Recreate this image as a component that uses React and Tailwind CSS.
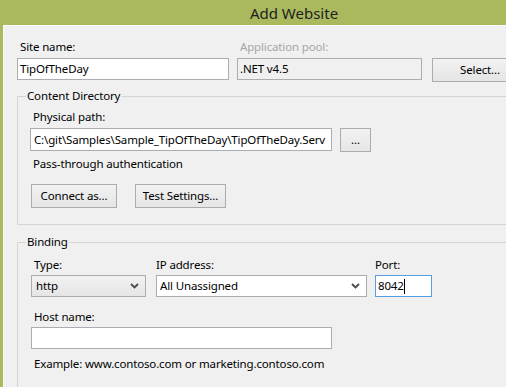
import React from "react";

const Chevron = () => (
  <svg width="9" height="6" viewBox="0 0 9 6" className="shrink-0">
    <polyline points="1,1 4.5,4.5 8,1" fill="none" stroke="#4a4a4a" strokeWidth="1.8" />
  </svg>
);

const Btn = ({ children, className = "" }) => (
  <div
    className={
      "flex items-center justify-center border border-[#acacac] bg-gradient-to-b from-[#f2f2f2] to-[#e5e5e5] text-[#000] " +
      className
    }
  >
    {children}
  </div>
);

export default function App() {
  return (
    <div className="w-[506px] h-[387px] overflow-hidden bg-[#f0f0f0] font-['Noto_Sans',sans-serif] text-[11.5px] tracking-[-0.15px] leading-[16px] text-black">
      <div className="h-[25px] bg-[#aab95e] flex items-center justify-center pl-[82px] text-[15px] tracking-normal text-[#1e1e1e]">
        Add Website
      </div>
      <div className="flex h-[362px]">
        <div className="w-[3px] shrink-0 bg-[#aab95e]" />
        <div className="flex-1 border-l border-t border-[#f9f9f9] pt-[13px] overflow-hidden">
          {/* Row 1 */}
          <div className="flex items-start pl-[13px]">
            <div className="w-[212px] shrink-0">
              <div className="pl-[3px] h-[16px]">Site name:</div>
              <div className="mt-[3px] h-[22px] border border-[#abadb3] bg-white pl-[2px] flex items-center">
                TipOfTheDay
              </div>
            </div>
            <div className="w-[185px] shrink-0 ml-[8px]">
              <div className="pl-[3px] h-[16px] text-[#a6a6a6]">Application pool:</div>
              <div className="mt-[3px] h-[22px] border border-[#adadad] bg-[#f0f0f0] pl-[2px] flex items-center">
                .NET v4.5
              </div>
            </div>
            <Btn className="ml-[10px] mt-[19px] h-[24px] w-[96px] shrink-0">Select...</Btn>
          </div>

          {/* Content Directory */}
          <div className="relative mt-[14px] ml-[13px] w-[560px] border border-[#d5d5d5] pt-[12px] pb-[16px]">
            <div className="absolute left-[8px] top-[-9px] px-[1px] bg-[#f0f0f0]">Content Directory</div>
            <div className="pl-[15px] h-[16px]">Physical path:</div>
            <div className="flex mt-[3px] pl-[12px] items-start">
              <div className="w-[302px] h-[23px] border border-[#abadb3] bg-white pl-[3px] flex items-center overflow-hidden whitespace-nowrap shrink-0">
                C:\git\Samples\Sample_TipOfTheDay\TipOfTheDay.Serv
              </div>
              <Btn className="ml-[8px] w-[31px] h-[24px] shrink-0">...</Btn>
            </div>
            <div className="mt-[4px] pl-[15px] h-[16px]">Pass-through authentication</div>
            <div className="flex mt-[12px] pl-[13px] gap-[18px]">
              <Btn className="w-[86px] h-[24px]">Connect as...</Btn>
              <Btn className="w-[91px] h-[24px]">Test Settings...</Btn>
            </div>
          </div>

          {/* Binding */}
          <div className="relative mt-[17px] ml-[13px] w-[560px] h-[200px] border border-[#d5d5d5] pt-[14px]">
            <div className="absolute left-[8px] top-[-9px] px-[1px] bg-[#f0f0f0]">Binding</div>
            <div className="flex pl-[13px]">
              <div className="w-[115px] shrink-0">
                <div className="pl-[3px] h-[16px]">Type:</div>
                <div className="mt-[2px] h-[22px] border border-[#acacac] bg-gradient-to-b from-[#f2f2f2] to-[#e5e5e5] pl-[4px] pr-[6px] flex items-center justify-between">
                  <span>http</span>
                  <Chevron />
                </div>
              </div>
              <div className="w-[211px] shrink-0 ml-[10px]">
                <div className="h-[16px]">IP address:</div>
                <div className="mt-[2px] h-[22px] border border-[#abadb3] bg-white pl-[3px] pr-[6px] flex items-center justify-between">
                  <span>All Unassigned</span>
                  <Chevron />
                </div>
              </div>
              <div className="w-[57px] shrink-0 ml-[8px]">
                <div className="h-[16px]">Port:</div>
                <div className="mt-[2px] h-[22px] border border-[#569de5] bg-white pl-[2px] flex items-center">
                  <span>8042</span>
                  <span className="w-[1px] h-[15px] bg-black" />
                </div>
              </div>
            </div>
            <div className="mt-[12px] pl-[16px] h-[16px]">Host name:</div>
            <div className="mt-[2px] ml-[13px] w-[301px] h-[22px] border border-[#abadb3] bg-white" />
            <div className="mt-[7px] pl-[16px] h-[16px]">Example: www.contoso.com or marketing.contoso.com</div>
          </div>
        </div>
      </div>
    </div>
  );
}
